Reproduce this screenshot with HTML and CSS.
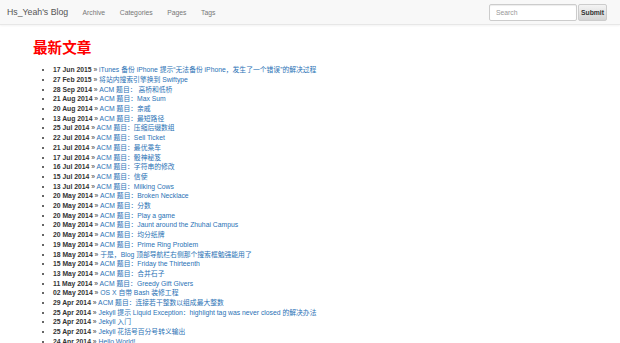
FILE: index.html
```html
<!DOCTYPE html>
<html lang="zh-CN">
<head>
  <meta charset="UTF-8" />
  <meta name="viewport" content="width=device-width, initial-scale=1.0"/>
  <title>Hs_Yeah's Blog</title>
  <link rel="stylesheet" href="styles.css">
</head>
<body>

  <nav class="navbar">
    <a class="brand" href="#">Hs_Yeah's Blog</a>
    <div class="nav-links">
      <a href="#">Archive</a>
      <a href="#">Categories</a>
      <a href="#">Pages</a>
      <a href="#">Tags</a>
    </div>
    <form class="search">
      <input type="text" placeholder="Search" />
      <button type="button">Submit</button>
    </form>
  </nav>

  <div class="container">
    <h2>最新文章</h2>
    <ul class="posts">
      <li><span class="date">17 Jun 2015</span> » <a href="#">iTunes 备份 iPhone 提示“无法备份 iPhone，发生了一个错误”的解决过程</a></li>
      <li><span class="date">27 Feb 2015</span> » <a href="#">将站内搜索引擎换到 Swiftype</a></li>
      <li><span class="date">28 Sep 2014</span> » <a href="#">ACM 题目： 高桥和低桥</a></li>
      <li><span class="date">21 Aug 2014</span> » <a href="#">ACM 题目：Max Sum</a></li>
      <li><span class="date">20 Aug 2014</span> » <a href="#">ACM 题目：亲戚</a></li>
      <li><span class="date">13 Aug 2014</span> » <a href="#">ACM 题目：最短路径</a></li>
      <li><span class="date">25 Jul 2014</span> » <a href="#">ACM 题目：压缩后缀数组</a></li>
      <li><span class="date">22 Jul 2014</span> » <a href="#">ACM 题目：Sell Ticket</a></li>
      <li><span class="date">21 Jul 2014</span> » <a href="#">ACM 题目：最优乘车</a></li>
      <li><span class="date">17 Jul 2014</span> » <a href="#">ACM 题目：骰神秘笈</a></li>
      <li><span class="date">16 Jul 2014</span> » <a href="#">ACM 题目：字符串的修改</a></li>
      <li><span class="date">15 Jul 2014</span> » <a href="#">ACM 题目：信使</a></li>
      <li><span class="date">13 Jul 2014</span> » <a href="#">ACM 题目：Milking Cows</a></li>
      <li><span class="date">20 May 2014</span> » <a href="#">ACM 题目：Broken Necklace</a></li>
      <li><span class="date">20 May 2014</span> » <a href="#">ACM 题目：分数</a></li>
      <li><span class="date">20 May 2014</span> » <a href="#">ACM 题目：Play a game</a></li>
      <li><span class="date">20 May 2014</span> » <a href="#">ACM 题目：Jaunt around the Zhuhai Campus</a></li>
      <li><span class="date">20 May 2014</span> » <a href="#">ACM 题目：均分纸牌</a></li>
      <li><span class="date">19 May 2014</span> » <a href="#">ACM 题目：Prime Ring Problem</a></li>
      <li><span class="date">18 May 2014</span> » <a href="#">于是，Blog 顶部导航栏右侧那个搜索框勉强能用了</a></li>
      <li><span class="date">15 May 2014</span> » <a href="#">ACM 题目：Friday the Thirteenth</a></li>
      <li><span class="date">13 May 2014</span> » <a href="#">ACM 题目：合并石子</a></li>
      <li><span class="date">11 May 2014</span> » <a href="#">ACM 题目：Greedy Gift Givers</a></li>
      <li><span class="date">02 May 2014</span> » <a href="#">OS X 自带 Bash 装修工程</a></li>
      <li><span class="date">29 Apr 2014</span> » <a href="#">ACM 题目：连接若干整数以组成最大整数</a></li>
      <li><span class="date">25 Apr 2014</span> » <a href="#">Jekyll 提示 Liquid Exception：highlight tag was never closed 的解决办法</a></li>
      <li><span class="date">25 Apr 2014</span> » <a href="#">Jekyll 入门</a></li>
      <li><span class="date">25 Apr 2014</span> » <a href="#">Jekyll 花括号百分号转义输出</a></li>
      <li><span class="date">24 Apr 2014</span> » <a href="#">Hello World!</a></li>
    </ul>
  </div>

</body>
</html>
```

FILE: styles.css
```css
body {
  font-family: 'Liberation Sans', 'Noto Sans CJK SC', sans-serif;
  font-size: 6.8px;
  color: #333;
  margin: 0;
  padding: 0;
  background: #fff;
}

a {
  text-decoration: none;
}

.navbar {
  display: flex;
  align-items: center;
  height: 24px;
  padding: 0 13px 0 7px;
  background: #f8f8f8;
  border-bottom: 1px solid #e7e7e7;
  box-shadow: 0 1px 2px rgba(0,0,0,0.05);
}

.brand {
  color: #555;
  font-size: 8.75px;
  margin-right: 7px;
}

.nav-links {
  display: flex;
}

.nav-links a {
  color: #777;
  padding: 0 7.3px;
}

.search {
  display: flex;
  margin-left: auto;
  gap: 1px;
}

.search input {
  width: 88px;
  height: 17px;
  box-sizing: border-box;
  border: 1px solid #ccc;
  border-radius: 2px;
  padding: 0 6px;
  font-family: inherit;
  font-size: 6.8px;
  color: #555;
  box-shadow: inset 0 1px 1px rgba(0,0,0,0.075);
}

.search input::placeholder {
  color: #999;
}

.search button {
  width: 29px;
  height: 17px;
  box-sizing: border-box;
  border: 1px solid #ccc;
  border-radius: 2px;
  background: linear-gradient(#f4f4f4, #d4d4d4);
  font-family: inherit;
  font-size: 6.8px;
  font-weight: bold;
  color: #333;
  padding: 0;
}

.container {
  padding: 0 33px;
}

h2 {
  color: #f00;
  font-size: 14.6px;
  font-weight: bold;
  line-height: 16px;
  margin: 15px 0 9.2px;
}

.posts {
  margin: 0;
  padding-left: 20px;
  line-height: 9.7px;
}

.date {
  font-weight: bold;
}

.posts a {
  color: #2a72b5;
}
```
